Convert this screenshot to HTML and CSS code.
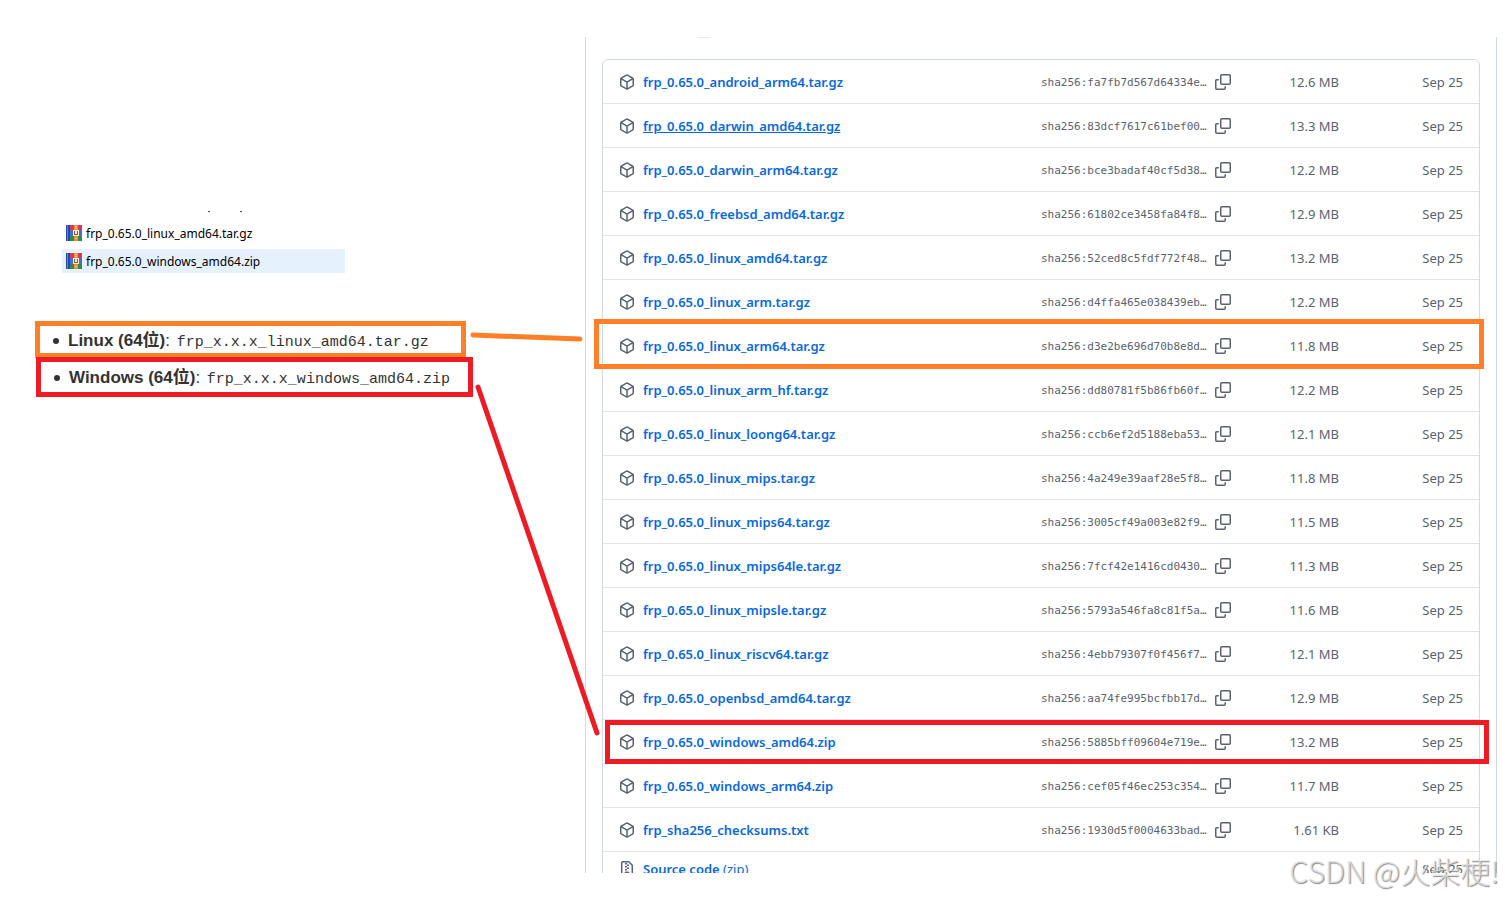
FILE: index.html
```html
<!DOCTYPE html>
<html lang="zh-CN">
<head>
    <meta charset="UTF-8">
    <meta name="viewport" content="width=device-width, initial-scale=1.0">
    <title>frp 0.65.0</title>
    <link rel="stylesheet" href="styles.css">
</head>
<body>
    <!-- Shared icons -->
    <svg class="sprite" aria-hidden="true">
        <symbol id="icon-package" viewBox="0 0 16 16">
            <path d="m8.878.392 5.25 3.045c.54.314.872.89.872 1.514v6.098a1.75 1.75 0 0 1-.872 1.514l-5.25 3.045a1.75 1.75 0 0 1-1.756 0l-5.25-3.045A1.75 1.75 0 0 1 1 11.049V4.951c0-.624.332-1.201.872-1.514L7.122.392a1.75 1.75 0 0 1 1.756 0ZM7.875 1.69l-4.63 2.685L8 7.133l4.755-2.758-4.63-2.685a.248.248 0 0 0-.25 0ZM2.5 5.677v5.372c0 .09.047.171.125.216l4.625 2.683V8.432Zm6.25 8.271 4.625-2.683a.25.25 0 0 0 .125-.216V5.677L8.75 8.432Z"/>
        </symbol>
        <symbol id="icon-copy" viewBox="0 0 16 16">
            <path d="M0 6.75C0 5.784.784 5 1.75 5h1.5a.75.75 0 0 1 0 1.5h-1.5a.25.25 0 0 0-.25.25v7.5c0 .138.112.25.25.25h7.5a.25.25 0 0 0 .25-.25v-1.5a.75.75 0 0 1 1.5 0v1.5A1.75 1.75 0 0 1 9.25 16h-7.5A1.75 1.75 0 0 1 0 14.25Z"/>
            <path d="M5 1.75C5 .784 5.784 0 6.75 0h7.5C15.216 0 16 .784 16 1.75v7.5A1.75 1.75 0 0 1 14.25 11h-7.5A1.75 1.75 0 0 1 5 9.25Zm1.75-.25a.25.25 0 0 0-.25.25v7.5c0 .138.112.25.25.25h7.5a.25.25 0 0 0 .25-.25v-7.5a.25.25 0 0 0-.25-.25Z"/>
        </symbol>
        <symbol id="icon-zip" viewBox="0 0 16 16">
            <path fill="none" stroke="#59636e" stroke-width="1.5" d="M4.5 14.3H3.7a1 1 0 0 1-1-1V1.8a1 1 0 0 1 1-1h5.7a1 1 0 0 1 .7.3l2.9 2.9a1 1 0 0 1 .3.7v8.6a1 1 0 0 1-1 1h-.8"/>
            <path d="M6 2h2v1.5H6zM8 3.5h2V5H8zM6 5h2v1.5H6zM8 6.5h2V8H8zM6 8h2v1.5H6z"/>
            <path d="M7.25 10.5h1.5c.97 0 1.75.78 1.75 1.75v3a.75.75 0 0 1-.75.75h-3.5a.75.75 0 0 1-.75-.75v-3c0-.97.78-1.75 1.75-1.75ZM7 12.25v2.25h2v-2.25a.25.25 0 0 0-.25-.25h-1.5a.25.25 0 0 0-.25.25Z"/>
        </symbol>
        <symbol id="icon-rar" viewBox="0 0 16 16">
            <path fill="#d8385e" d="M3 0h13v5H3z"/>
            <path fill="#3f6fd8" d="M3 5h13v6H3z"/>
            <path fill="#2e8b4a" d="M3 11h13v5H3z"/>
            <path fill="#2449a8" d="M0 0h4v16H0z"/>
            <path fill="#5f86dc" d="M1 0h1v16H1z"/>
            <path fill="#e9913c" d="M8 0h4v16H8z"/>
            <path fill="#f6c478" d="M9 1h2v1H9zM9 3h2v1H9zM9 13h2v1H9z"/>
            <path fill="#fff0d8" d="M7 5h6v6H7z"/>
            <path fill="#b5521a" d="M8 6h1v3h2V6h1v4H8z"/>
        </symbol>
    </svg>

    <main class="page">
        <section class="notes">
            <div class="cut-row"><span></span><span></span></div>
            <ul class="files">
                <li><svg class="icon"><use href="#icon-rar"/></svg>frp_0.65.0_linux_amd64.tar.gz</li>
                <li class="selected"><svg class="icon"><use href="#icon-rar"/></svg>frp_0.65.0_windows_amd64.zip</li>
            </ul>
            <ul class="platforms">
                <li class="linux"><strong>Linux (64位)</strong>: <code>frp_x.x.x_linux_amd64.tar.gz</code></li>
                <li class="windows"><strong>Windows (64位)</strong>: <code>frp_x.x.x_windows_amd64.zip</code></li>
            </ul>
        </section>

        <section class="release">
            <div class="cut-badge"></div>
            <div class="assets">
                <table>
                    <colgroup>
                        <col>
                        <col class="col-digest">
                        <col class="col-size">
                        <col class="col-date">
                    </colgroup>
                    <tbody id="asset-rows"></tbody>
                </table>
            </div>
        </section>

        <svg class="connectors" aria-hidden="true">
            <path class="orange" d="M473 335L580 339"/>
            <path class="red" d="M478 387L597 733"/>
        </svg>
        <div class="watermark">CSDN @火柴梗!</div>
    </main>

    <script>
        // name, digest, size, mark round the row
        const assets = [
            ['frp_0.65.0_android_arm64.tar.gz', 'fa7fb7d567d64334e', '12.6 MB'],
            ['frp_0.65.0_darwin_amd64.tar.gz', '83dcf7617c61bef00', '13.3 MB'],
            ['frp_0.65.0_darwin_arm64.tar.gz', 'bce3badaf40cf5d38', '12.2 MB'],
            ['frp_0.65.0_freebsd_amd64.tar.gz', '61802ce3458fa84f8', '12.9 MB'],
            ['frp_0.65.0_linux_amd64.tar.gz', '52ced8c5fdf772f48', '13.2 MB'],
            ['frp_0.65.0_linux_arm.tar.gz', 'd4ffa465e038439eb', '12.2 MB'],
            ['frp_0.65.0_linux_arm64.tar.gz', 'd3e2be696d70b8e8d', '11.8 MB', 'mark-orange'],
            ['frp_0.65.0_linux_arm_hf.tar.gz', 'dd80781f5b86fb60f', '12.2 MB'],
            ['frp_0.65.0_linux_loong64.tar.gz', 'ccb6ef2d5188eba53', '12.1 MB'],
            ['frp_0.65.0_linux_mips.tar.gz', '4a249e39aaf28e5f8', '11.8 MB'],
            ['frp_0.65.0_linux_mips64.tar.gz', '3005cf49a003e82f9', '11.5 MB'],
            ['frp_0.65.0_linux_mips64le.tar.gz', '7fcf42e1416cd0430', '11.3 MB'],
            ['frp_0.65.0_linux_mipsle.tar.gz', '5793a546fa8c81f5a', '11.6 MB'],
            ['frp_0.65.0_linux_riscv64.tar.gz', '4ebb79307f0f456f7', '12.1 MB'],
            ['frp_0.65.0_openbsd_amd64.tar.gz', 'aa74fe995bcfbb17d', '12.9 MB'],
            ['frp_0.65.0_windows_amd64.zip', '5885bff09604e719e', '13.2 MB', 'mark-red'],
            ['frp_0.65.0_windows_arm64.zip', 'cef05f46ec253c354', '11.7 MB'],
            ['frp_sha256_checksums.txt', '1930d5f0004633bad', '1.61 KB']
        ];

        const rows = assets.map(([name, digest, size, mark], i) => `
            <tr class="${i === 1 ? 'hovered' : ''}">
                <td>
                    <div class="name"><svg class="icon"><use href="#icon-package"/></svg><a href="#">${name}</a></div>
                    ${mark ? `<span class="mark ${mark}"></span>` : ''}
                </td>
                <td><div class="digest"><code>sha256:${digest}…</code><button type="button" aria-label="Copy digest"><svg class="icon"><use href="#icon-copy"/></svg></button></div></td>
                <td class="size">${size}</td>
                <td class="date">Sep 25</td>
            </tr>`);

        // Source archives have no digest or size
        rows.push(`
            <tr class="source">
                <td><div class="name"><svg class="icon"><use href="#icon-zip"/></svg><a href="#">Source code <span>(zip)</span></a></div></td>
                <td></td>
                <td></td>
                <td class="date">Sep 25</td>
            </tr>`);

        document.getElementById('asset-rows').innerHTML = rows.join('');
    </script>
</body>
</html>
```
FILE: styles.css
```css
* {
    box-sizing: border-box;
}

body {
    margin: 0;
    background: #fff;
    color: #000;
    font-family: "Noto Sans", "Noto Sans CJK SC", sans-serif;
    font-size: 13px;
}

ul {
    list-style: none;
    margin: 0;
    padding: 0;
}

.sprite {
    position: absolute;
    width: 0;
    height: 0;
}

.icon {
    width: 16px;
    height: 16px;
    flex: none;
    display: block;
    fill: #59636e;
}

.page {
    position: relative;
    display: grid;
    grid-template-columns: 585px 1fr;
    align-items: start;
    padding: 37px 6px 26px 0;
    overflow: hidden;
}

/* Left side */
.notes {
    padding: 174px 0 0 35px;
}

.cut-row {
    display: flex;
    gap: 30px;
    height: 1px;
    margin: 0 0 9px 173px;
}

.cut-row span {
    width: 2px;
    background: #555;
}

.files {
    display: flex;
    flex-direction: column;
    gap: 4px;
    width: 283px;
    margin-left: 27px;
    font-size: 12px;
}

.files li {
    display: flex;
    align-items: center;
    gap: 4px;
    height: 24px;
    padding-left: 4px;
}

.files .selected {
    background: #e5f1fd;
}

.platforms {
    margin-top: 48px;
    color: #333;
    font-family: "Liberation Sans", "Noto Sans CJK SC", sans-serif;
    font-size: 17px;
    line-height: 29px;
}

.platforms li {
    border: 5px solid;
    white-space: nowrap;
}

.platforms li::before {
    content: "";
    display: inline-block;
    width: 6px;
    height: 6px;
    margin: 0 9px 2px 13px;
    border-radius: 50%;
    background: #333;
}

.platforms code {
    margin-left: 2px;
    font-family: "Liberation Mono", monospace;
    font-size: 15px;
}

.platforms .linux {
    width: 431px;
    height: 37px;
    border-color: #ff7f27;
}

.platforms .windows {
    width: 437px;
    height: 40px;
    margin: -1px 0 0 1px;
    border-color: #ed1c24;
    line-height: 31px;
}

/* Release assets */
.release {
    height: 836px;
    padding: 0 16px;
    border: solid #d1d9e0;
    border-width: 0 1px;
    overflow: hidden;
}

.cut-badge {
    width: 14px;
    height: 1px;
    margin: 0 0 21px 95px;
    background: #e6e9ec;
}

.assets {
    border: 1px solid #d1d9e0;
    border-radius: 6px;
}

table {
    width: 100%;
    table-layout: fixed;
    border-spacing: 0;
    color: #59636e;
}

.col-digest {
    width: 198px;
}

.col-size {
    width: 100px;
}

.col-date {
    width: 140px;
}

tr {
    position: relative;
}

td {
    height: 44px;
    padding: 0;
    border-bottom: 1px solid #dfe4e9;
    white-space: nowrap;
}

.source td {
    height: 34px;
}

.name {
    display: flex;
    align-items: center;
    gap: 8px;
    padding-left: 16px;
}

a {
    color: #0969da;
    font-weight: 600;
    text-decoration: none;
}

a span {
    font-weight: 400;
}

.hovered a {
    text-decoration: underline;
}

.digest {
    display: flex;
    align-items: center;
    gap: 8px;
}

.digest code {
    padding-top: 2px;
    font-family: "DejaVu Sans Mono", monospace;
    font-size: 11px;
}

.digest button {
    padding: 0;
    border: 0;
    background: none;
    cursor: pointer;
}

.size,
.date {
    text-align: right;
}

.date {
    padding-right: 16px;
}

/* Hand-drawn marks */
.mark {
    position: absolute;
    border: 5px solid;
    pointer-events: none;
}

.mark-orange {
    inset: -5px -5px -1px -9px;
    border-color: #ff7f27;
}

.mark-red {
    inset: 0 -10px 0 2px;
    border-color: #ed1c24;
}

.connectors {
    position: absolute;
    inset: 0;
    width: 100%;
    height: 100%;
    fill: none;
    stroke-width: 5;
    stroke-linecap: round;
    pointer-events: none;
}

.orange {
    stroke: #ff7f27;
}

.red {
    stroke: #ed1c24;
}

.watermark {
    position: absolute;
    right: 4px;
    bottom: 9px;
    color: rgba(225, 225, 225, 0.8);
    font-family: "Noto Sans CJK SC", sans-serif;
    font-size: 30px;
    font-weight: 300;
    line-height: 40px;
    text-shadow: 1px 1px 1px #888;
    white-space: nowrap;
}
```
